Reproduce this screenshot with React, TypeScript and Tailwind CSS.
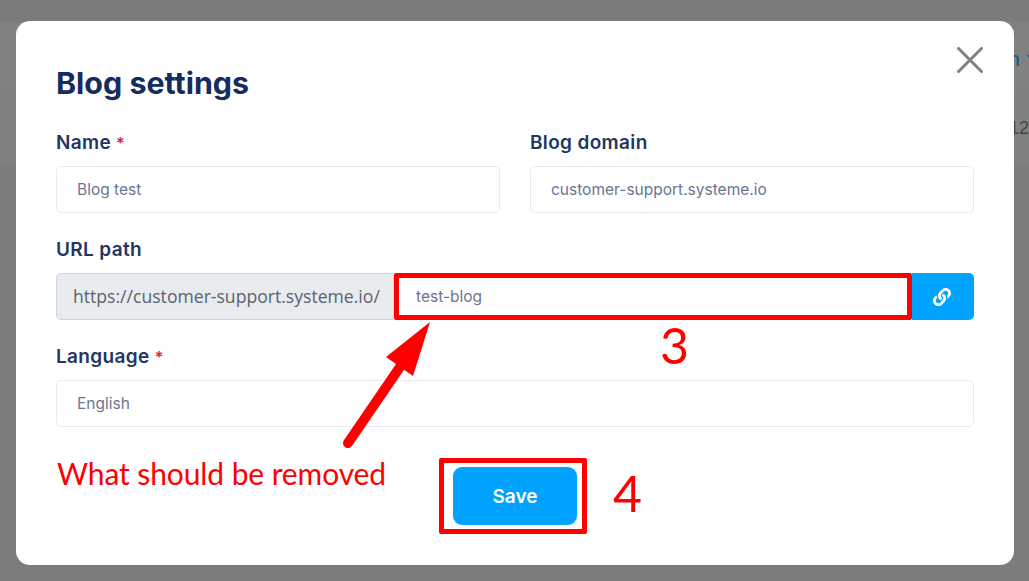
import React from "react";
import { FaLink } from "react-icons/fa";

const font = "[font-family:'Inter','Noto_Sans',sans-serif]";
const lato = "[font-family:'Lato','Noto_Sans',sans-serif]";

function Field({ label, req, value, className = "" }: { label: string; req?: boolean; value: string; className?: string }) {
  return (
    <div className={className}>
      <div className="h-[24px] text-[19px] leading-[24px] font-semibold tracking-[0.35px] text-[#253560]">
        {label}
        {req && <span className="ml-[5px] text-[#e0243c] text-[16px]">*</span>}
      </div>
      <div className="mt-[11px] h-[47px] flex items-center px-[20px] pt-[1px] rounded-[5px] border border-[#e9ebf2] text-[15.5px] text-[#6b7590] bg-white">
        {value}
      </div>
    </div>
  );
}

export default function App() {
  return (
    <div className={`relative h-[581px] w-[1029px] overflow-hidden bg-[#7b7c7e] ${font}`}>
      <div className="h-[22px] bg-[#7a7b7d]" />
      <div className="h-[72px] bg-[#808181] flex justify-end items-center gap-[7px]">
        <span className={`text-[#0b5c90] text-[22px] leading-none ${lato}`}>n</span>
        <svg className="mr-[-6px] shrink-0" width="8" height="6" viewBox="0 0 8 6">
          <path d="M0 0H8L4 6Z" fill="#0b5c90" />
        </svg>
      </div>
      <div className="h-[69px] bg-[#7f8080] flex justify-end items-center">
        <span className="text-[#3f4447] text-[18px] [font-family:'Liberation_Sans',sans-serif]">12</span>
      </div>

      <div className="absolute left-[16px] top-[21px] w-[998px] h-[544px] bg-white rounded-[14px] px-[40px] pt-[40px]">
        <svg className="absolute right-[31px] top-[26px]" width="26" height="26" viewBox="0 0 26 26" fill="none">
          <path d="M1.5 1.5L24.5 24.5M24.5 1.5L1.5 24.5" stroke="#808080" strokeWidth="3" strokeLinecap="round" />
        </svg>

        <h1 className="h-[44px] text-[30.4px] leading-[44px] font-bold text-[#152c5e]">Blog settings</h1>

        <div className="mt-[26px] grid grid-cols-2 gap-x-[30px]">
          <Field label="Name" req value="Blog test" />
          <Field label="Blog domain" value="customer-support.systeme.io" />
        </div>

        <div className="mt-[25px] h-[24px] text-[19px] leading-[24px] font-semibold tracking-[0.35px] text-[#253560]">URL path</div>
        <div className="mt-[11px] flex h-[47px]">
          <div className="w-[338px] flex items-center pl-[16px] rounded-l-[5px] border border-[#ced4da] bg-[#e9ecef] text-[17.6px] text-[#5a6270] [font-family:'Open_Sans',sans-serif]">
            https://customer-support.systeme.io/
          </div>
          <div className="w-[518px] flex items-center pl-[17px] pt-[1px] border-[5px] rounded-[2px] border-[#fe0000] text-[15.5px] text-[#6b7590] bg-white">
            test-blog
          </div>
          <div className="flex-1 flex items-center justify-center pr-[3px] rounded-r-[5px] bg-[#00a3ff]">
            <FaLink className="text-white text-[18px]" />
          </div>
        </div>

        <Field className="mt-[25px]" label="Language" req value="English" />

        <div className="mt-[31px] flex items-start">
          <div className={`w-[383px] -mt-[3px] text-[30px] leading-[36px] text-[#fe0000] pl-[1px] font-normal tracking-[-0.1px] ${lato}`}>What should be removed</div>
          <div className="flex items-center justify-center w-[148px] h-[76px] border-[5px] rounded-[2px] border-[#fe0000]">
            <div className="flex items-center justify-center w-[124px] h-[58px] ml-[4px] pt-[3px] rounded-[9px] bg-[#00a3ff] text-white text-[19px] font-semibold">Save</div>
          </div>
          <div className={`ml-[26px] mt-[3px] text-[50px] leading-[64px] text-[#fe0000] ${lato}`}>4</div>
        </div>

        <div className={`absolute left-[644px] top-[292px] text-[50px] leading-[64px] text-[#fe0000] ${lato}`}>3</div>

        <svg className="absolute left-[320px] top-[298px]" width="100" height="132" viewBox="0 0 100 132">
          <path d="M12 124L64 48" stroke="#fe0000" strokeWidth="10" strokeLinecap="round" />
          <path d="M94 3L50 38L77 57Z" fill="#fe0000" />
        </svg>
      </div>
    </div>
  );
}
